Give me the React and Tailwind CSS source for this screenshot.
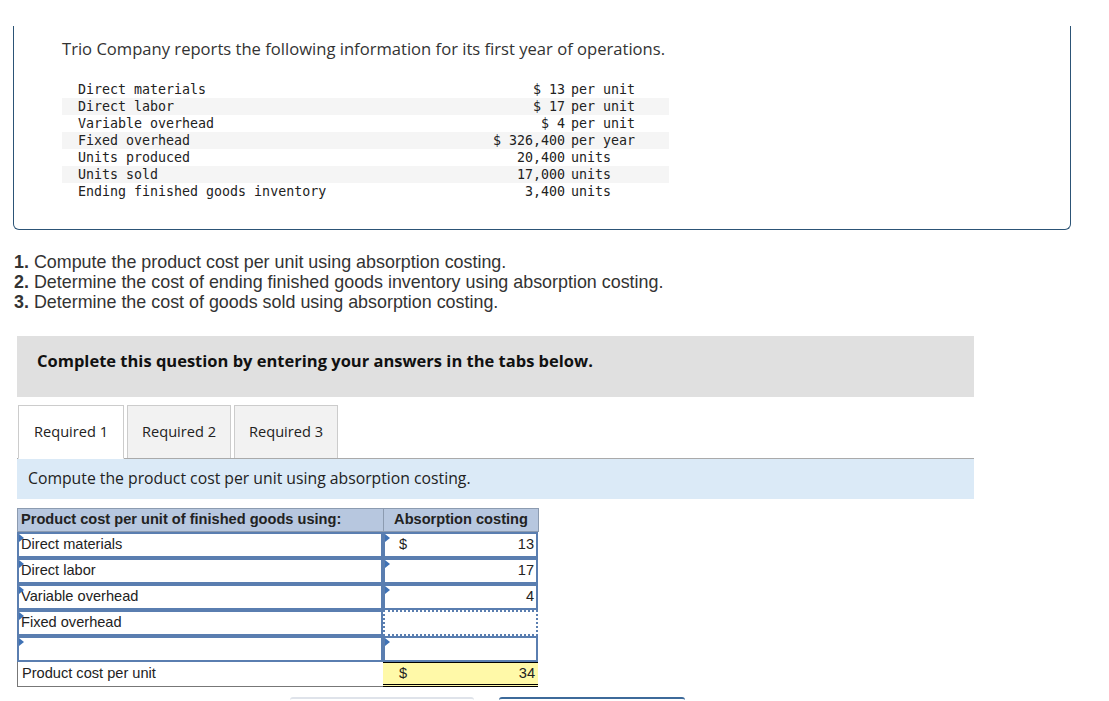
const facts = [
  { label: "Direct materials", amount: "$ 13", unit: "per unit" },
  { label: "Direct labor", amount: "$ 17", unit: "per unit" },
  { label: "Variable overhead", amount: "$ 4", unit: "per unit" },
  { label: "Fixed overhead", amount: "$ 326,400", unit: "per year" },
  { label: "Units produced", amount: "20,400", unit: "units" },
  { label: "Units sold", amount: "17,000", unit: "units" },
  { label: "Ending finished goods inventory", amount: "3,400", unit: "units" },
];

const rows = [
  { label: "Direct materials", dollar: true, value: "13" },
  { label: "Direct labor", value: "17" },
  { label: "Variable overhead", value: "4" },
  { label: "Fixed overhead", value: "", dotted: true },
  { label: "", value: "" },
];

const Marker = () => (
  <span className="absolute left-0 top-0 h-0 w-0 border-y-[4px] border-l-[5px] border-y-transparent border-l-[#3f72b5]" />
);

const InputRow = ({ label, dollar, value, dotted }) => (
  <div className="flex h-[26px]">
    <div className="relative flex w-[366px] items-center border-2 border-[#5a7eb0] bg-white pl-[2px] text-[14.6px] text-[#222]">
      <Marker />
      {label}
    </div>
    <div
      className={`relative flex w-[155px] items-center justify-between border-2 bg-white pl-[14px] pr-[2px] text-[14.6px] text-[#222] ${
        dotted ? "border-dotted border-[#5a7eb0]" : "border-[#5a7eb0]"
      }`}
    >
      {!dotted && <Marker />}
      <span>{dollar ? "$" : ""}</span>
      <span>{value}</span>
    </div>
  </div>
);

export default function App() {
  return (
    <div className="h-[701px] w-[1109px] overflow-hidden bg-white text-[#333]">
      <div className="ml-[13px] mt-[26px] h-[204px] w-[1058px] rounded-b-[6px] border border-t-0 border-[#2c5476] pl-[48px] pt-[13px]">
        <p className="font-['Open_Sans',sans-serif] text-[16.6px] leading-[20px] text-[#333]">
          Trio Company reports the following information for its first year of operations.
        </p>
        <div className="mt-[22px] w-[607px] font-['DejaVu_Sans_Mono',monospace] text-[13.3px] text-[#222]">
          {facts.map((f, i) => (
            <div key={f.label} className={`flex h-[17px] items-center whitespace-nowrap ${i % 2 === 1 ? "bg-[#f5f5f5]" : ""}`}>
              <span className="w-[257px] shrink-0 pl-[16px]">{f.label}</span>
              <span className="w-[246px] shrink-0 whitespace-pre text-right">{f.amount}</span>
              <span className="pl-[6px]">{f.unit}</span>
            </div>
          ))}
        </div>
      </div>

      <div className="ml-[14px] mt-[22px] font-['Liberation_Sans',sans-serif] text-[17.9px] leading-[20px] text-[#333]">
        <p><b>1.</b> Compute the product cost per unit using absorption costing.</p>
        <p><b>2.</b> Determine the cost of ending finished goods inventory using absorption costing.</p>
        <p><b>3.</b> Determine the cost of goods sold using absorption costing.</p>
      </div>

      <div className="ml-[17px] mt-[24px] flex h-[61px] w-[957px] items-center bg-[#e0e0e0] pb-[11px] pl-[20px] font-['Open_Sans',sans-serif] text-[16.5px] font-bold text-[#111]">
        Complete this question by entering your answers in the tabs below.
      </div>

      <div className="ml-[17px] mt-[8px] flex w-[957px] items-end gap-[3px] border-b border-[#aaa] font-['Open_Sans',sans-serif] text-[14.6px] text-[#222]">
        <div className="-mb-px ml-px flex h-[54px] w-[106px] items-center justify-center border border-b-white border-[#ccc] bg-white">
          Required 1
        </div>
        <div className="flex h-[53px] w-[104px] items-center justify-center border border-b-0 border-[#ccc] bg-[#f2f2f2]">
          Required 2
        </div>
        <div className="flex h-[53px] w-[104px] items-center justify-center border border-b-0 border-[#ccc] bg-[#f2f2f2]">
          Required 3
        </div>
      </div>

      <div className="ml-[17px] flex h-[40px] w-[957px] items-center bg-[#dbeaf7] pl-[11px] font-['Open_Sans',sans-serif] text-[15.75px] text-[#222]">
        Compute the product cost per unit using absorption costing.
      </div>

      <div className="ml-[17px] mt-[9px] w-[522px] font-['Liberation_Sans',sans-serif]">
        <div className="flex h-[24px] border border-[#8c9bb0] bg-[#b7c7df] text-[14.6px] font-bold text-[#222]">
          <div className="flex w-[366px] items-center border-r border-[#8c9bb0] pl-[3px]">
            Product cost per unit of finished goods using:
          </div>
          <div className="flex flex-1 items-center justify-center">Absorption costing</div>
        </div>
        {rows.map((r, i) => (
          <InputRow key={i} {...r} />
        ))}
        <div className="flex h-[25px] text-[14.6px] text-[#222]">
          <div className="flex w-[366px] items-center border-b border-l border-[#777] pl-[4px]">
            Product cost per unit
          </div>
          <div className="flex w-[155px] items-center justify-between border-b-[3px] border-t border-double border-t-solid border-black bg-[#fff9a8] pl-[16px] pr-[3px]">
            <span>$</span>
            <span>34</span>
          </div>
        </div>
      </div>

      <div className="ml-[290px] mt-[10px] flex gap-[25px]">
        <div className="h-[30px] w-[184px] rounded-t-[3px] border-t-2 border-[#dfe3ea]" />
        <div className="h-[30px] w-[186px] rounded-t-[3px] border-t-2 border-[#3d6a9a]" />
      </div>
    </div>
  );
}
